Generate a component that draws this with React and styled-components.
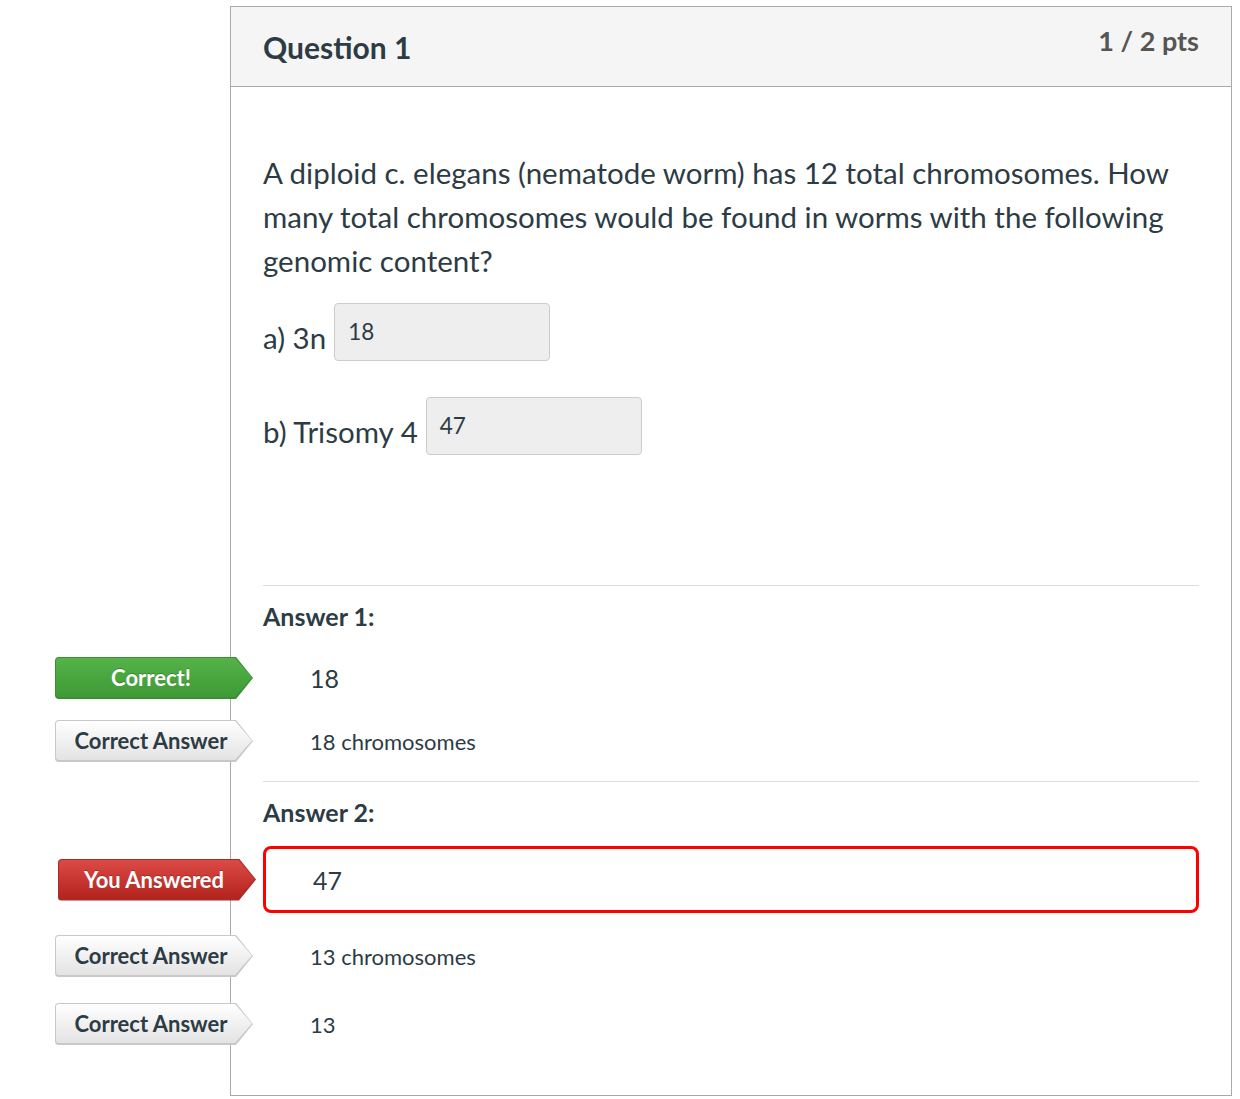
import React from 'react'
import styled, { createGlobalStyle, css } from 'styled-components'

const GlobalStyle = createGlobalStyle`
    body{
        margin:0;
        background:#fff;
        font-family:Lato, "Liberation Sans", sans-serif;
        color:#2d3b45;
    }
`

const App = () => {
    return (
        <Page>
            <GlobalStyle />
            <Card>
                <Header>
                    <Title>Question 1</Title>
                    <Points>1 / 2 pts</Points>
                </Header>
                <Body>
                    <QuestionText>
                        A diploid c. elegans (nematode worm) has 12 total chromosomes. How many total chromosomes would be found in worms with the following genomic content?
                    </QuestionText>
                    <Blank>
                        <BlankLabel>a) 3n</BlankLabel>
                        <BlankInput>18</BlankInput>
                    </Blank>
                    <Blank>
                        <BlankLabel>b) Trisomy 4</BlankLabel>
                        <BlankInput>47</BlankInput>
                    </Blank>

                    <AnswerGroup first>
                        <AnswerTitle>Answer 1:</AnswerTitle>
                        <AnswerRow>
                            <Badge kind="correct"><BadgeInner kind="correct">Correct!</BadgeInner></Badge>
                            <AnswerValue large>18</AnswerValue>
                        </AnswerRow>
                        <AnswerRow end>
                            <Badge><BadgeInner>Correct Answer</BadgeInner></Badge>
                            <AnswerValue>18 chromosomes</AnswerValue>
                        </AnswerRow>
                    </AnswerGroup>

                    <AnswerGroup>
                        <AnswerTitle>Answer 2:</AnswerTitle>
                        <AnswerRow wrong>
                            <Badge kind="wrong"><BadgeInner kind="wrong">You Answered</BadgeInner></Badge>
                            <AnswerValue large>47</AnswerValue>
                        </AnswerRow>
                        <AnswerRow>
                            <Badge><BadgeInner>Correct Answer</BadgeInner></Badge>
                            <AnswerValue>13 chromosomes</AnswerValue>
                        </AnswerRow>
                        <AnswerRow last>
                            <Badge><BadgeInner>Correct Answer</BadgeInner></Badge>
                            <AnswerValue>13</AnswerValue>
                        </AnswerRow>
                    </AnswerGroup>
                </Body>
            </Card>
        </Page>
    )
}

export default App

const Page = styled.div`
    padding:6px 0 0 230px;
`
const Card = styled.div`
    width:1000px;
    height:1088px;
    border:1px solid #aaa;
`
const Header = styled.div`
    height:79px;
    background:#f5f5f5;
    border-bottom:1px solid #aaa;
    display:flex;
    justify-content:space-between;
    padding:0 32px;
`
const Title = styled.div`
    font-size:30px;
    font-weight:700;
    margin-top:22px;
`
const Points = styled.div`
    font-size:27px;
    font-weight:700;
    color:#555;
    margin-top:17px;
`
const Body = styled.div`
    padding:64px 32px 0;
`
const QuestionText = styled.div`
    font-size:29.5px;
    line-height:44px;
`
const Blank = styled.div`
    display:flex;
    align-items:flex-start;
    gap:8px;
    font-size:29.5px;
    margin-top:20px;
    & + &{
        margin-top:36px;
    }
`
const BlankLabel = styled.span`
    line-height:36px;
    margin-top:17px;
`
const BlankInput = styled.div`
    width:216px;
    height:58px;
    box-sizing:border-box;
    padding:15px 13px 0;
    font-size:22.5px;
    line-height:26px;
    background:#eee;
    border:1px solid #ccc;
    border-radius:4px;
`
const AnswerGroup = styled.div`
    border-top:1px solid #ddd;
    margin-top:${p => p.first ? '130px' : '0'};
`
const AnswerTitle = styled.div`
    font-size:25px;
    line-height:30px;
    font-weight:700;
    padding:15px 0 0;
    height:71px;
    box-sizing:border-box;
`
const AnswerRow = styled.div`
    position:relative;
    display:flex;
    align-items:center;
    min-height:42px;
    margin-bottom:${p => p.end ? '19px' : '21px'};
    padding-left:47px;
    ${p => p.wrong && css`
        min-height:67px;
        box-sizing:border-box;
        border:3px solid #f00;
        border-radius:8px;
        margin-top:-7px;
        margin-bottom:22px;
    `}
    ${p => p.last && css`
        margin-top:26px;
    `}
`
const AnswerValue = styled.div`
    font-size:${p => p.large ? '25px' : '22px'};
`
const kinds = {
    correct: { border:'#3a8f33', bg:'linear-gradient(#56b34a,#3d9a35)', color:'#fff' },
    wrong: { border:'#a92a26', bg:'linear-gradient(#dc4a45,#b3231d)', color:'#fff' },
    neutral: { border:'#c8c8c8', bg:'linear-gradient(#ffffff,#e3e3e3)', color:'#2d3b45' },
}
const arrow = css`
    clip-path:polygon(0 0, calc(100% - 17px) 0, 100% 50%, calc(100% - 17px) 100%, 0 100%);
`
const Badge = styled.div`
    position:absolute;
    left:-208px;
    top:50%;
    transform:translateY(-50%);
    width:198px;
    height:42px;
    padding:1px 1px 2px;
    box-sizing:border-box;
    border-radius:4px 0 0 4px;
    background:${p => kinds[p.kind || 'neutral'].border};
    ${arrow}
`
const BadgeInner = styled.div`
    height:100%;
    border-radius:3px 0 0 3px;
    background:${p => kinds[p.kind || 'neutral'].bg};
    color:${p => kinds[p.kind || 'neutral'].color};
    ${arrow}
    display:flex;
    align-items:center;
    justify-content:center;
    padding-right:6px;
    font-size:22px;
    font-weight:700;
    ${p => p.kind && css`text-shadow:0 -1px 0 rgba(0,0,0,0.25);`}
`
